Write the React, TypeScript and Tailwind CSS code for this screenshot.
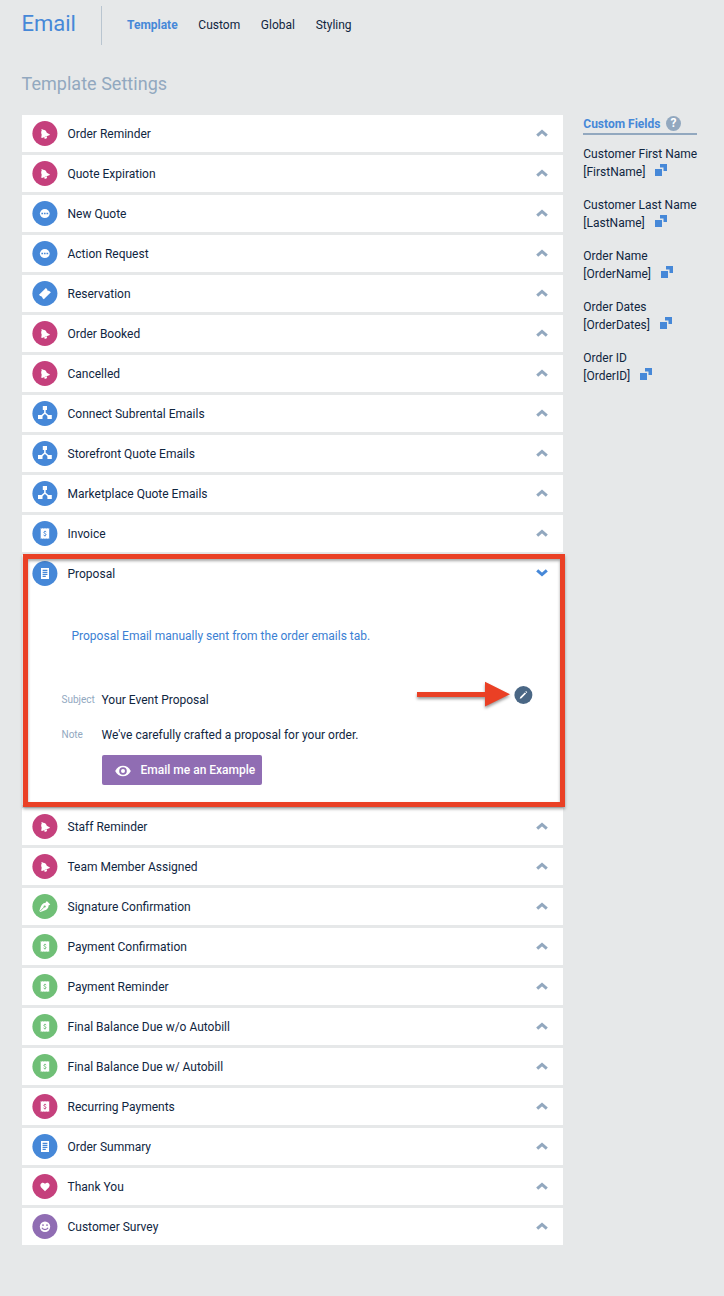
import React from 'react';
import clsx from 'clsx';

type IconName =
  | 'bell'
  | 'chat'
  | 'ticket'
  | 'network'
  | 'receipt'
  | 'document'
  | 'pen'
  | 'heart'
  | 'smile';

type Template = {
  title: string;
  icon: IconName;
  color: string;
};

const PINK = 'text-[#c5407c]';
const BLUE = 'text-[#4688d8]';
const GREEN = 'text-[#6fbf76]';
const PURPLE = 'text-[#906db3]';

const templates: Template[] = [
  { title: 'Order Reminder', icon: 'bell', color: PINK },
  { title: 'Quote Expiration', icon: 'bell', color: PINK },
  { title: 'New Quote', icon: 'chat', color: BLUE },
  { title: 'Action Request', icon: 'chat', color: BLUE },
  { title: 'Reservation', icon: 'ticket', color: BLUE },
  { title: 'Order Booked', icon: 'bell', color: PINK },
  { title: 'Cancelled', icon: 'bell', color: PINK },
  { title: 'Connect Subrental Emails', icon: 'network', color: BLUE },
  { title: 'Storefront Quote Emails', icon: 'network', color: BLUE },
  { title: 'Marketplace Quote Emails', icon: 'network', color: BLUE },
  { title: 'Invoice', icon: 'receipt', color: BLUE },
  { title: 'Proposal', icon: 'document', color: BLUE },
  { title: 'Staff Reminder', icon: 'bell', color: PINK },
  { title: 'Team Member Assigned', icon: 'bell', color: PINK },
  { title: 'Signature Confirmation', icon: 'pen', color: GREEN },
  { title: 'Payment Confirmation', icon: 'receipt', color: GREEN },
  { title: 'Payment Reminder', icon: 'receipt', color: GREEN },
  { title: 'Final Balance Due w/o Autobill', icon: 'receipt', color: GREEN },
  { title: 'Final Balance Due w/ Autobill', icon: 'receipt', color: GREEN },
  { title: 'Recurring Payments', icon: 'receipt', color: PINK },
  { title: 'Order Summary', icon: 'document', color: BLUE },
  { title: 'Thank You', icon: 'heart', color: PINK },
  { title: 'Customer Survey', icon: 'smile', color: PURPLE },
];

const customFields = [
  { label: 'Customer First Name', token: '[FirstName]' },
  { label: 'Customer Last Name', token: '[LastName]' },
  { label: 'Order Name', token: '[OrderName]' },
  { label: 'Order Dates', token: '[OrderDates]' },
  { label: 'Order ID', token: '[OrderID]' },
];

// All glyphs are drawn on the 26x25 grid of the round badge,
// currentColor is the colour of the badge itself
const glyphs: Record<IconName, React.ReactElement> = {
  bell: (
    <g fill="#fff">
      <path d="M9.3 8.2 L10.2 8 L10.8 8.8 C12.8 8.6 14.2 9.8 14.8 11.8 L17.9 13.4 L17.8 14 L10 17 L9.2 16.4 L9.7 13.8 C9 12.2 9 10.4 9.8 9.3 Z" />
      <path d="M12 16.4 L15 15.3 C15.3 16.6 14.6 17.6 13.7 17.8 C12.7 17.9 12.2 17.3 12 16.4 Z" />
    </g>
  ),
  chat: (
    <g>
      <ellipse cx="12.8" cy="12.6" rx="4.9" ry="4.5" fill="#fff" />
      <path
        d="M9.4 12.5 H11.1 M12 12.5 H13.6 M14.5 12.5 H16.2"
        stroke="currentColor"
        strokeWidth="1.5"
      />
    </g>
  ),
  ticket: (
    <path
      fill="#fff"
      d="M7 13.8 L13.9 7 L15.2 8.2 C15.1 9.3 15.9 9.9 16.9 9.7 L18.9 11.2 L11.8 18.3 L10.4 17 C10.5 15.9 9.4 14.8 8.2 14.9 Z"
    />
  ),
  network: (
    <g>
      <path
        d="M12.9 8 V12.2 M12.9 12 L8.8 15.6 M12.9 12 L17.1 15.6"
        stroke="#fff"
        strokeWidth="1.5"
        fill="none"
      />
      <path
        fill="#fff"
        d="M10.8 5 H15 V9 H10.8 Z M6 14 H10.5 V18 H6 Z M15.4 14 H19.8 V18 H15.4 Z"
      />
    </g>
  ),
  receipt: (
    <g>
      <path
        fill="#fff"
        d="M8.7 7 L9.8 7.7 L10.9 7 L11.9 7.7 L13 7 L14.1 7.7 L15.1 7 L16.1 7.7 L17.2 7 V18 L16.1 17.3 L15.1 18 L14.1 17.3 L13 18 L11.9 17.3 L10.9 18 L9.8 17.3 L8.7 18 Z"
      />
      <path
        d="M14.2 11 C13.7 10.3 11.9 10.3 11.9 11.4 C11.9 12.6 14 12.4 14 13.6 C14 14.7 12.2 14.8 11.6 14 M13 9.8 V10.7 M13 14.4 V15.4"
        stroke="currentColor"
        strokeWidth="1"
        fill="none"
      />
    </g>
  ),
  document: (
    <g>
      <path fill="#fff" d="M9 7 H17 V18 H9 Z" />
      <path
        d="M10.6 9.4 H15.4 M10.6 11.4 H15.4 M10.6 13.4 H15.4 M10.6 15.4 H13.8"
        stroke="currentColor"
        strokeWidth="1.1"
      />
    </g>
  ),
  pen: (
    <g>
      <path
        fill="#fff"
        d="M14.8 7 L18.3 10.4 L16.5 11.5 C16.7 14.4 14.8 16.2 8.3 17.9 L7.4 17.1 C8.7 11.3 10.7 8.9 13.6 8.7 Z"
      />
      <path d="M8.1 17.2 L12.2 13" stroke="currentColor" strokeWidth=".8" />
      <circle cx="12.7" cy="12.5" r="1.1" fill="currentColor" />
    </g>
  ),
  heart: (
    <path
      fill="#fff"
      d="M13 17.2 L9.2 13.4 C6.9 10.9 10 7.1 13 9.8 C16 7.1 19.2 10.9 16.8 13.4 Z"
    />
  ),
  smile: (
    <g>
      <circle cx="13" cy="12.7" r="5.2" fill="#fff" />
      <circle cx="11" cy="11.1" r=".9" fill="currentColor" />
      <circle cx="15" cy="11.1" r=".9" fill="currentColor" />
      <path
        d="M9.9 13.8 C10.9 16.2 15.1 16.2 16.1 13.8"
        stroke="currentColor"
        strokeWidth="1.1"
        fill="none"
      />
    </g>
  ),
};

const Badge = ({ icon, color }: { icon: IconName; color: string }) => (
  <svg viewBox="0 0 26 25" className={clsx('h-[25px] w-[26px] shrink-0', color)}>
    <circle cx="12.9" cy="12.5" r="12.5" fill="currentColor" />
    {glyphs[icon]}
  </svg>
);

const Chevron = ({ open }: { open: boolean }) => (
  <svg
    viewBox="0 0 12 8"
    className={clsx(
      'mb-0.5 h-2 w-3',
      open ? 'rotate-180 text-[#4688d8]' : 'text-[#92a8bf]'
    )}
  >
    <path
      d="M1.2 6.7 L6 2.4 L10.8 6.7"
      fill="none"
      stroke="currentColor"
      strokeWidth="3"
    />
  </svg>
);

const ProposalDetails = () => (
  <div className="relative pl-[39.5px]">
    <p className="pt-[34px] pl-2.5 leading-5 text-[#3b80d3]">
      Proposal Email manually sent from the order emails tab.
    </p>
    <div className="mt-11 flex h-5 items-center">
      <span className="w-10 text-[10px] text-[#92a8bf]">Subject</span>
      <span>Your Event Proposal</span>
    </div>
    <div className="mt-[15px] flex h-5 items-center">
      <span className="w-10 text-[10px] text-[#92a8bf]">Note</span>
      <span>We've carefully crafted a proposal for your order.</span>
    </div>
    <button className="mt-2.5 ml-[40.5px] flex h-[30px] w-40 items-center rounded-[2px] bg-[#906db3] pl-[13px] font-medium text-white">
      <svg viewBox="0 0 16 12" className="mt-0.5 mr-[9.5px] h-3 w-4">
        <path
          d="M.2 6 C3.3 -1 12.7 -1 15.8 6 C12.7 13 3.3 13 .2 6 Z"
          fill="#fff"
        />
        <circle cx="8" cy="6" r="3.8" fill="#906db3" />
        <circle cx="8" cy="6" r="2" fill="#fff" />
      </svg>
      Email me an Example
    </button>
    {/* edit button */}
    <svg
      viewBox="0 0 19 18"
      className="absolute top-[94px] right-[30px] h-[18px] w-[19px]"
    >
      <circle cx="9.4" cy="9" r="9" fill="#4a6785" />
      <path
        fill="#fff"
        d="M5.7 12.8 L6.2 11 L10.8 6.4 L12.1 7.6 L7.5 12.3 Z M11.3 5.8 L11.8 5.3 C12.4 4.9 13.6 6 13.1 6.6 L12.6 7.1 Z"
      />
    </svg>
    {/* callout arrow */}
    <svg
      viewBox="0 0 94 26"
      className="absolute top-[90px] left-[395px] h-[26px] w-[94px] overflow-visible drop-shadow-[0_2px_1.5px_rgba(0,0,0,0.4)]"
    >
      <path fill="#ea4025" d="M0 10 H68 V-.3 L93 12.3 L68 24.5 V15 H0 Z" />
    </svg>
  </div>
);

const TemplateRow = ({ template }: { template: Template }) => {
  const open = template.title === 'Proposal';
  return (
    <li className={clsx('relative bg-white', open ? 'h-[250px]' : 'h-[37px]')}>
      <div className="flex h-[37px] items-center pr-[15px] pl-2.5">
        <Badge icon={template.icon} color={template.color} />
        <span className="ml-[9.5px] flex-1">{template.title}</span>
        <Chevron open={open} />
      </div>
      {open && <ProposalDetails />}
      {open && (
        <div className="absolute -top-px left-px z-10 h-[253px] w-[542px] border-5 border-[#ea4025] shadow-[0_2px_3px_rgba(0,0,0,0.35),inset_0_2px_3px_rgba(0,0,0,0.35)]" />
      )}
    </li>
  );
};

const Header = () => (
  <header className="flex h-[50px] items-start pl-[21.5px]">
    <h1 className="w-[79.5px] pt-2 text-[22px] leading-8 text-[#4688d8]">
      Email
    </h1>
    <div className="mt-1.5 h-[39px] w-px bg-[#b9c5d0]" />
    <nav className="mt-[15px] ml-[25px] flex gap-[20.7px] leading-5">
      <a className="font-bold text-[#4688d8]">Template</a>
      <a>Custom</a>
      <a>Global</a>
      <a>Styling</a>
    </nav>
  </header>
);

const CustomFields = () => (
  <aside className="ml-[20.3px] w-[115px]">
    <div className="flex h-5 w-[113.7px] items-center border-b-2 border-[#92a8bf]">
      <span className="font-bold text-[#4688d8]">Custom Fields</span>
      <span className="mb-0.5 ml-[5.5px] flex size-[15px] items-center justify-center rounded-full bg-[#92a8bf] text-[12px] font-bold text-white">
        ?
      </span>
    </div>
    <ul className="mt-2.5 space-y-[15px]">
      {customFields.map((field) => (
        <li key={field.token} className="leading-[18px] whitespace-nowrap">
          <p>{field.label}</p>
          <p className="flex">
            {field.token}
            <svg viewBox="0 0 12 12" className="mt-px ml-[9.8px] size-3">
              <path fill="#4688d8" d="M5 0 H12 V7 H8.5 V3.5 H5 Z M0 5 H7 V12 H0 Z" />
            </svg>
          </p>
        </li>
      ))}
    </ul>
  </aside>
);

const App = (): React.ReactElement => (
  <div className="min-h-[1296px] w-[724px] bg-[#e6e8e9] font-[Roboto,sans-serif] text-xs text-[#10263f]">
    <Header />
    <h2 className="pt-5 pl-[21.5px] text-lg leading-7 tracking-[0.03px] text-[#92a8bf]">
      Template Settings
    </h2>
    <main className="flex items-start pt-[17px] pl-[22px]">
      <ul className="flex w-[541px] flex-col gap-[3px]">
        {templates.map((template) => (
          <TemplateRow key={template.title} template={template} />
        ))}
      </ul>
      <CustomFields />
    </main>
  </div>
);

export default App;
